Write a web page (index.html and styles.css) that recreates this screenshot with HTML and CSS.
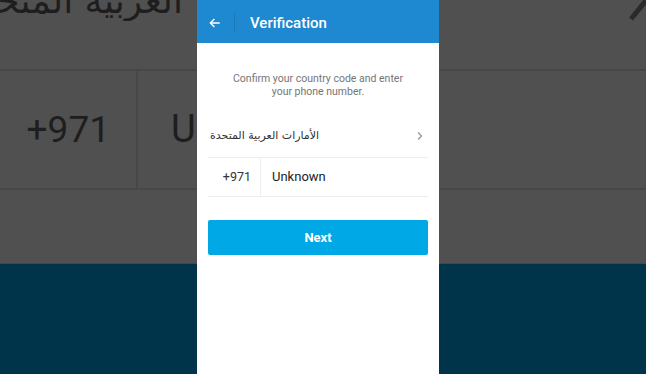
FILE: index.html
```html
<!DOCTYPE html>
<html lang="en">
<head>
  <meta charset="UTF-8" />
  <meta name="viewport" content="width=device-width, initial-scale=1" />
  <title>Verification</title>
  <link rel="stylesheet" href="styles.css">
</head>
<body>
  <!-- Blurred, enlarged copy of the screen behind the phone -->
  <div class="scene">
    <div class="bg-top">
      <div class="bg-country">العربية المتحدة</div>
      <svg class="bg-chevron" width="24" height="22" viewBox="0 0 24 22">
        <path d="M-6 -32L26 -2L9 19" fill="none" stroke="#2a2a2a" stroke-width="5" />
      </svg>
    </div>
    <div class="bg-row">
      <div class="bg-code">+971</div>
      <div class="bg-name">Unknown</div>
    </div>
    <div class="bg-rest"></div>
    <div class="bg-bottom"></div>
  </div>

  <div class="phone">
    <div class="header">
      <svg class="back" width="14" height="14" viewBox="0 0 24 24">
        <path d="M20 12H5M11 5l-7 7 7 7" fill="none" stroke="#fff" stroke-width="2.4" />
      </svg>
      <span class="header-sep"></span>
      <h1>Verification</h1>
    </div>

    <p class="hint">Confirm your country code and enter<br>your phone number.</p>

    <div class="form">
      <div class="country-row">
        <span class="country" dir="rtl">الأمارات العربية المتحدة</span>
        <svg class="chevron" width="8" height="10" viewBox="0 0 8 10">
          <path d="M2 1.5l3.5 3.5L2 8.5" fill="none" stroke="#999" stroke-width="1.4" />
        </svg>
      </div>
      <div class="phone-row">
        <div class="code">+971</div>
        <div class="number">Unknown</div>
      </div>
      <button class="next-btn">Next</button>
    </div>
  </div>
</body>
</html>
```

FILE: styles.css
```css
/* Reset */
* {
  margin: 0; padding: 0; box-sizing: border-box;
  font-family: Roboto, "Noto Sans", sans-serif;
}
body {
  width: 646px;
  height: 374px;
  overflow: hidden;
  background: #00344a;
  position: relative;
}
/* Background scene */
.scene {
  height: 374px;
  display: flex;
  flex-direction: column;
}
.bg-top {
  height: 71px;
  background: #505050;
  border-bottom: 2px solid #474747;
  display: flex;
  justify-content: space-between;
  align-items: flex-start;
  overflow: hidden;
}
.bg-country {
  width: 183px;
  font-family: "DejaVu Sans", sans-serif;
  font-size: 36px;
  line-height: 40px;
  margin-top: -19px;
  color: #1e1e1e;
  white-space: nowrap;
  overflow: hidden;
  direction: rtl;
  text-align: right;
}
.bg-chevron {
  display: block;
}
.bg-row {
  height: 119px;
  background: #505050;
  border-bottom: 2px solid #474747;
  display: flex;
}
.bg-code {
  width: 138px;
  border-right: 2px solid #474747;
  font-size: 37px;
  color: #1e1e1e;
  text-align: right;
  padding-right: 26px;
  line-height: 117px;
}
.bg-name {
  font-size: 38px;
  color: #1e1e1e;
  padding-left: 33px;
  line-height: 117px;
  white-space: nowrap;
}
.bg-rest {
  height: 74px;
  background: #505050;
  border-bottom: 1px solid #3c4a50;
}
.bg-bottom {
  flex: 1;
  background: #00344a;
}
/* Phone screen */
.phone {
  position: absolute;
  left: 197px;
  top: 0;
  width: 242px;
  height: 374px;
  background: #fff;
}
.header {
  height: 43px;
  padding-top: 3px;
  background: #1e88d0;
  display: flex;
  align-items: center;
}
.back {
  margin-left: 11px;
}
.header-sep {
  width: 1px;
  height: 20px;
  background: #1a78b8;
  margin-left: 12px;
}
.header h1 {
  font-size: 15px;
  font-weight: 500;
  color: #fff;
  margin-left: 15px;
}
.hint {
  margin-top: 29px;
  font-size: 10.5px;
  line-height: 13px;
  color: #757575;
  text-align: center;
}
/* Form */
.form {
  padding: 0 11px;
}
.country-row {
  height: 44px;
  margin-top: 16px;
  display: flex;
  align-items: center;
  justify-content: space-between;
  border-bottom: 1px solid #eee;
  padding: 0 4px 0 2px;
}
.country {
  font-family: "DejaVu Sans", sans-serif;
  font-size: 11px;
  color: #333;
}
.phone-row {
  height: 39px;
  display: flex;
  border-bottom: 1px solid #eee;
}
.code {
  width: 53px;
  border-right: 1px solid #eee;
  text-align: right;
  padding-right: 9px;
  font-size: 12.5px;
  line-height: 38px;
  color: #333;
}
.number {
  padding-left: 11px;
  font-size: 13px;
  line-height: 38px;
  color: #222;
}
.next-btn {
  margin-top: 23px;
  width: 100%;
  height: 35px;
  border: none;
  border-radius: 2px;
  background: #00a8e6;
  color: #fff;
  font-size: 13px;
  font-weight: bold;
}
```
